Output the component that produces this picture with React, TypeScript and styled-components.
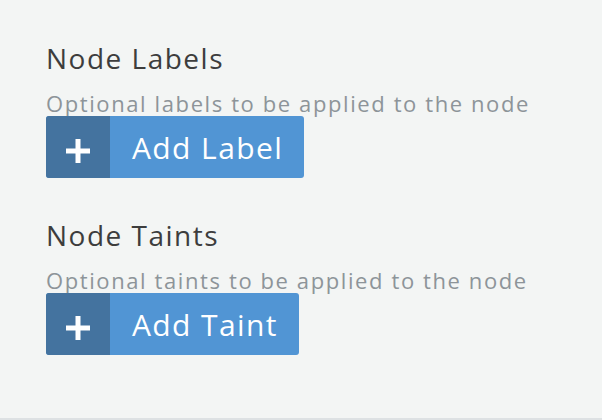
import * as React from "react";
import styled, {createGlobalStyle} from "styled-components";

const GlobalStyle = createGlobalStyle`
  html, body {
    margin: 0;
    padding: 0;
    background: #f3f5f4;
  }
  body {
    font-family: "Open Sans", "Liberation Sans", sans-serif;
  }
`

const Page = styled.div`
  width: 602px;
  height: 420px;
  box-sizing: border-box;
  background: #f3f5f4;
  border-bottom: 2px solid #dde1e3;
  padding: 39px 0 0 46px;
`

const Section = styled.div`
  margin-bottom: 38px;
`

const Title = styled.div`
  font-size: 28px;
  line-height: 38px;
  letter-spacing: 1.5px;
  color: #3d3d3d;
`

const Hint = styled.div`
  font-size: 22px;
  line-height: 26px;
  letter-spacing: 1.6px;
  color: #8d9499;
  margin-top: 13px;
  white-space: nowrap;
`

const Button = styled.button`
  display: flex;
  align-items: stretch;
  height: 62px;
  padding: 0;
  border: none;
  border-radius: 3px;
  overflow: hidden;
  background: #5195d4;
  cursor: pointer;
  font-family: inherit;
`

const IconBox = styled.span`
  width: 64px;
  background: #44739f;
  display: flex;
  align-items: center;
  justify-content: center;
  padding-top: 7px;
  box-sizing: border-box;
`

const Label = styled.span`
  display: flex;
  align-items: center;
  padding: 0 21px 0 22px;
  font-size: 30px;
  letter-spacing: 1.4px;
  color: #ffffff;
`

const Plus = () => (
    <svg width="24" height="24" viewBox="0 0 24 24">
        <path d="M9.5 0h5v9.5H24v5h-9.5V24h-5v-9.5H0v-5h9.5z" fill="#ffffff"/>
    </svg>
)

const sections = [
    {title: 'Node Labels', hint: 'Optional labels to be applied to the node', action: 'Add Label'},
    {title: 'Node Taints', hint: 'Optional taints to be applied to the node', action: 'Add Taint'},
]

export default function App() {
    return <>
        <GlobalStyle/>
        <Page>
            {sections.map(s => (
                <Section key={s.title}>
                    <Title>{s.title}</Title>
                    <Hint>{s.hint}</Hint>
                    <Button>
                        <IconBox><Plus/></IconBox>
                        <Label>{s.action}</Label>
                    </Button>
                </Section>
            ))}
        </Page>
    </>
}
